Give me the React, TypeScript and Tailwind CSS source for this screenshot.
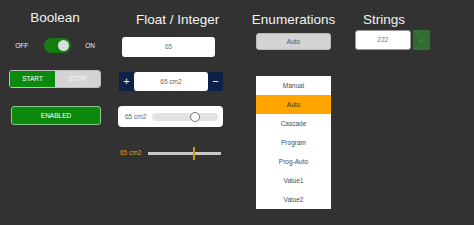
import React from 'react'

const ENUMS = ['Manual', 'Auto', 'Cascade', 'Program', 'Prog-Auto', 'Value1', 'Value2']

function Title({ children, className = '' }: { children: React.ReactNode; className?: string }) {
  return (
    <div className={`h-[20px] leading-[20px] text-[13.5px] text-[#f2f2f2] whitespace-nowrap ${className}`}>
      {children}
    </div>
  )
}

export default function App() {
  return (
    <div
      className="w-[474px] h-[225px] bg-[#323232] flex overflow-hidden"
      style={{ fontFamily: '"Liberation Sans", Arial, sans-serif' }}
    >
      {/* Boolean */}
      <div className="ml-[9px] w-[92px] pt-[8px] flex flex-col">
        <Title className="text-center">Boolean</Title>
        <div className="mt-[10px] flex items-center justify-center h-[15px] text-[6.5px] text-[#eeeeee]">
          <span className="mr-[16px]">OFF</span>
          <div className="w-[27px] h-[15px] rounded-full bg-[#137d13] flex items-center justify-end pr-[2px]">
            <div className="w-[11px] h-[11px] rounded-full bg-[#dcdcdc]" />
          </div>
          <span className="ml-[14px]">ON</span>
        </div>
        <div className="mt-[17px] h-[18px] flex rounded-[3px] border border-[#bdbdbd] overflow-hidden text-[6.5px]">
          <div className="flex-1 bg-[#0d8a0d] text-white flex items-center justify-center">START</div>
          <div className="flex-1 bg-[#d4d4d4] text-[#f4f4f4] flex items-center justify-center">STOP</div>
        </div>
        <div className="mt-[18px] ml-[2px] h-[19px] rounded-[3px] border border-[#8fc58f] bg-[#0d8a0d] text-white text-[6.5px] flex items-center justify-center">
          ENABLED
        </div>
      </div>

      {/* Float / Integer */}
      <div className="ml-[17px] w-[105px] pt-[10px] flex flex-col">
        <Title className="pl-[18px]">Float / Integer</Title>
        <div className="mt-[7px] ml-[4px] w-[93px] h-[20px] rounded-[3px] bg-white text-[6.5px] text-[#777] flex items-center justify-center">
          65
        </div>
        <div className="mt-[15px] ml-[1px] h-[19px] flex">
          <div className="w-[15px] bg-[#0c2246] text-white text-[11px] flex items-center justify-center">+</div>
          <div className="flex-1 bg-white rounded-[3px] text-[6.5px] text-[#666] flex items-center justify-center">
            65 cm2
          </div>
          <div className="w-[15px] bg-[#0c2246] text-white text-[11px] flex items-center justify-center">−</div>
        </div>
        <div className="mt-[15px] h-[21px] rounded-[4px] bg-white flex items-center pl-[7px] pr-[5px]">
          <span className="text-[6.5px] text-[#666] w-[27px]">65 cm2</span>
          <div className="flex-1 h-[8px] rounded-full bg-[#e2e2e2] relative">
            <div className="absolute left-[38px] top-[-1px] w-[10px] h-[10px] rounded-full bg-white border border-[#777]" />
          </div>
        </div>
        <div className="mt-[19px] ml-[2px] h-[14px] flex items-center">
          <span className="text-[6.5px] text-[#e09a1c] w-[28px]">65 cm2</span>
          <div className="flex-1 h-[3px] bg-[#c8c8c8] relative mr-[2px]">
            <div className="absolute left-[45px] top-[-5px] w-[2px] h-[13px] bg-[#c99418]" />
          </div>
        </div>
      </div>

      {/* Enumerations */}
      <div className="ml-[33px] w-[75px] pt-[10px] flex flex-col items-center">
        <Title className="text-center">Enumerations</Title>
        <div className="mt-[3px] w-full h-[17px] rounded-[3px] border border-[#bbbbbb] bg-[#d3d3d3] text-[6.5px] text-[#555] flex items-center justify-center">
          Auto
        </div>
        <div className="mt-[26px] w-full bg-white flex flex-col">
          {ENUMS.map(e => (
            <div
              key={e}
              className={`h-[19px] flex items-center justify-center text-[6.5px] ${
                e === 'Auto' ? 'bg-[#ffa500] text-[#333]' : 'text-[#4a4a4a]'
              }`}
            >
              {e}
            </div>
          ))}
        </div>
      </div>

      {/* Strings */}
      <div className="ml-[24px] w-[75px] pt-[10px] flex flex-col">
        <Title className="pl-[8px]">Strings</Title>
        <div className="flex h-[20px]">
          <div className="w-[56px] rounded-[3px] bg-white border border-[#999] text-[6.5px] text-[#777] flex items-center justify-center">
            222
          </div>
          <div className="ml-[2px] w-[17px] bg-[#2f6e2f] flex items-center justify-center">
            <svg width="7" height="7" viewBox="0 0 24 24" fill="none" stroke="#6a9a6a" strokeWidth="3">
              <path d="M5 13l4 4L19 7" />
            </svg>
          </div>
        </div>
      </div>
    </div>
  )
}
